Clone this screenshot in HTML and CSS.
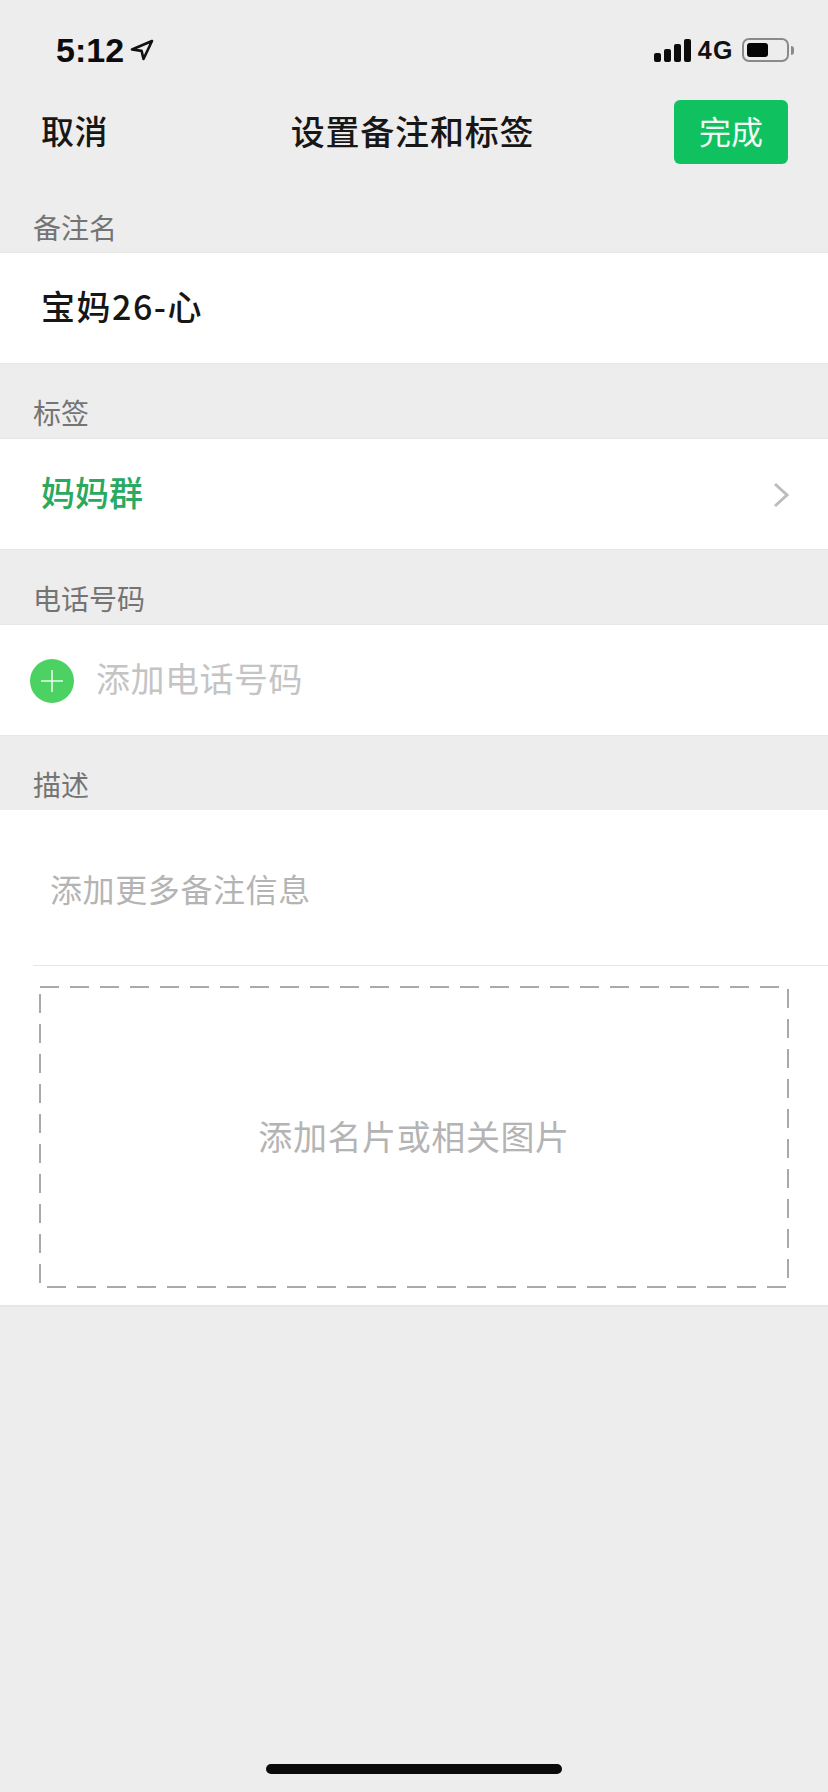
FILE: index.html
```html
<!DOCTYPE html>
<html lang="zh-CN">
  <head>
    <meta charset="UTF-8" />
    <meta name="viewport" content="width=device-width, initial-scale=1.0" />
    <title>设置备注和标签</title>
    <link rel="stylesheet" href="styles.css">
  </head>
  <body>
    <main class="screen">
      <div class="status">
        <div class="status-left">
          <span class="time">5:12</span>
          <svg class="arrow" width="24" height="22" viewBox="0 0 24 22">
            <path d="M22 2 2 10.5l9.6 1.4L13.5 20z" fill="none" stroke="#111" stroke-width="2.6" stroke-linejoin="round" />
          </svg>
        </div>
        <div class="status-right">
          <div class="signal">
            <i class="bar bar-1"></i>
            <i class="bar bar-2"></i>
            <i class="bar bar-3"></i>
            <i class="bar bar-4"></i>
          </div>
          <span class="network">4G</span>
          <div class="battery"><div class="battery-fill"></div></div>
          <div class="battery-cap"></div>
        </div>
      </div>

      <header class="nav">
        <span class="nav-side">取消</span>
        <h1 class="nav-title">设置备注和标签</h1>
        <button class="done">完成</button>
      </header>

      <h2 class="label label-first">备注名</h2>
      <div class="row"><span class="name">宝妈26-心</span></div>

      <h2 class="label">标签</h2>
      <div class="row row-between">
        <span class="tag">妈妈群</span>
        <svg class="chevron" width="18" height="28" viewBox="0 0 18 28">
          <path d="M3 3l12 11L3 25" fill="none" stroke="#bdbdbd" stroke-width="3" />
        </svg>
      </div>

      <h2 class="label">电话号码</h2>
      <div class="row row-phone">
        <svg class="add" width="44" height="44" viewBox="0 0 44 44">
          <circle cx="22" cy="22" r="22" fill="#4cd263" />
          <path d="M22 11v22M11 22h22" stroke="#e9fbec" stroke-width="1.6" />
        </svg>
        <span class="placeholder">添加电话号码</span>
      </div>

      <h2 class="label">描述</h2>
      <section class="desc">
        <div class="desc-text"><span class="hint">添加更多备注信息</span></div>
        <div class="photo">
          <svg class="dashes" width="750" height="302" viewBox="0 0 750 302">
            <path d="M1 1H749V301H1z" fill="none" stroke="#a9a9a9" stroke-width="2" stroke-dasharray="19 11" />
          </svg>
          <span class="photo-hint">添加名片或相关图片</span>
        </div>
      </section>

      <div class="home-bar"></div>
    </main>
  </body>
</html>
```

FILE: styles.css
```css
* {
  box-sizing: border-box;
}
body {
  margin: 0;
  background-color: #ededed;
  font-family: "Noto Sans CJK SC", "Liberation Sans", sans-serif;
}
.screen {
  width: 828px;
  height: 1792px;
  display: flex;
  flex-direction: column;
  overflow: hidden;
}

.status {
  height: 93px;
  padding: 30px 34px 0 56px;
  display: flex;
  justify-content: space-between;
  align-items: flex-start;
}
.status-left,
.status-right {
  display: flex;
  align-items: center;
  height: 40px;
}
.time {
  font-family: "Liberation Sans", sans-serif;
  font-weight: 700;
  font-size: 34px;
  color: #0c0c0c;
}
.arrow {
  margin-left: 6px;
}
.signal {
  display: flex;
  align-items: flex-end;
  gap: 3px;
  height: 24px;
}
.bar {
  width: 7px;
  background: #0c0c0c;
  border-radius: 2px;
}
.bar-1 { height: 9px; }
.bar-2 { height: 13px; }
.bar-3 { height: 18px; }
.bar-4 { height: 23px; }
.network {
  font-family: "Liberation Sans", sans-serif;
  font-weight: 700;
  font-size: 25px;
  letter-spacing: 1.5px;
  color: #111;
  margin-left: 7px;
}
.battery {
  width: 47px;
  height: 24px;
  margin-left: 8px;
  padding: 3px;
  border: 2px solid #8a8a8a;
  border-radius: 7px;
}
.battery-fill {
  width: 21px;
  height: 100%;
  background: #050505;
  border-radius: 3px;
}
.battery-cap {
  width: 3px;
  height: 9px;
  margin-left: 2px;
  background: #8a8a8a;
  border-radius: 0 3px 3px 0;
}

.nav {
  height: 78px;
  padding: 0 40px 0 41px;
  display: flex;
  justify-content: space-between;
  align-items: center;
  font-size: 33px;
  color: #171717;
}
.nav-side {
  width: 110px;
  margin-bottom: 4px;
  letter-spacing: 0.5px;
  font-weight: 500;
}
.nav-title {
  margin: 0 0 4px;
  font-size: 34px;
  font-weight: 500;
  letter-spacing: 0.8px;
}
.done {
  width: 114px;
  height: 64px;
  padding: 0 0 4px;
  border: none;
  border-radius: 6px;
  background: #0fc15f;
  color: #f1fbf4;
  font-family: inherit;
  font-size: 32px;
}

.label {
  height: 74px;
  margin: 0;
  padding: 28px 0 0 33px;
  font-size: 28px;
  line-height: 40px;
  font-weight: 400;
  color: #747474;
}
.label-first {
  height: 81px;
  padding-top: 36px;
}
.row {
  height: 112px;
  padding: 0 41px 6px;
  display: flex;
  align-items: center;
  background: #fff;
  border-top: 1px solid #e6e6e6;
  border-bottom: 1px solid #e6e6e6;
}
.row-between {
  justify-content: space-between;
  padding-right: 38px;
}
.row-phone {
  padding-left: 30px;
}
.name {
  font-size: 34px;
  letter-spacing: 1.5px;
  font-weight: 500;
  color: #161616;
}
.tag {
  font-size: 34px;
  font-weight: 500;
  color: #2aa960;
}
.chevron {
  margin-top: 7px;
}
.add {
  margin: 8px 22px 0 0;
}
.placeholder {
  font-size: 34px;
  letter-spacing: 0.5px;
  color: #c4c4c4;
}

.desc {
  height: 497px;
  background: #fff;
  border-bottom: 2px solid #e6e6e6;
}
.desc-text {
  height: 156px;
  margin-left: 33px;
  padding-left: 17px;
  display: flex;
  align-items: center;
  border-bottom: 1px solid #e6e6e6;
}
.hint {
  font-size: 32px;
  letter-spacing: 0.6px;
  color: #b4b4b4;
}
.photo {
  width: 750px;
  height: 302px;
  margin: 20px 0 0 39px;
  padding-bottom: 4px;
  display: flex;
  align-items: center;
  justify-content: center;
  position: relative;
}
.dashes {
  position: absolute;
  left: 0;
  top: 0;
}
.photo-hint {
  font-size: 34px;
  letter-spacing: 0.6px;
  color: #b4b4b4;
}

.home-bar {
  width: 296px;
  height: 10px;
  margin: auto auto 18px;
  background: #0a0a0a;
  border-radius: 5px;
}
```
